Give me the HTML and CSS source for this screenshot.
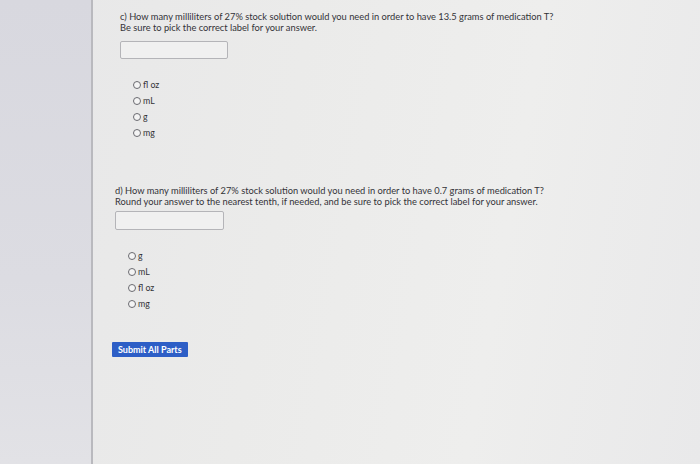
FILE: index.html
```html
<!DOCTYPE html>
<html>
<head>
<meta charset="utf-8">
<link rel="stylesheet" href="styles.css">
</head>
<body>
<div class="screen">
  <aside class="side"></aside>
  <main class="content">
    <section class="part part-c">
      <p class="q">c) How many milliliters of 27% stock solution would you need in order to have 13.5 grams of medication T?<br>Be sure to pick the correct label for your answer.</p>
      <div class="answer"></div>
      <ul class="opts">
        <li><span class="radio"></span>fl oz</li>
        <li><span class="radio"></span>mL</li>
        <li><span class="radio"></span>g</li>
        <li><span class="radio"></span>mg</li>
      </ul>
    </section>
    <section class="part part-d">
      <p class="q">d) How many milliliters of 27% stock solution would you need in order to have 0.7 grams of medication T?<br>Round your answer to the nearest tenth, if needed, and be sure to pick the correct label for your answer.</p>
      <div class="answer"></div>
      <ul class="opts">
        <li><span class="radio"></span>g</li>
        <li><span class="radio"></span>mL</li>
        <li><span class="radio"></span>fl oz</li>
        <li><span class="radio"></span>mg</li>
      </ul>
      <button class="submit">Submit All Parts</button>
    </section>
  </main>
</div>
</body>
</html>
```
FILE: styles.css
```css
html, body {
  margin: 0;
  padding: 0;
  width: 700px;
  height: 464px;
  overflow: hidden;
}
body {
  font-family: Lato, "Open Sans", sans-serif;
  color: #333338;
}
.screen {
  display: flex;
  width: 700px;
  height: 464px;
  background: linear-gradient(100deg, #e7e7e8 0%, #ebebea 40%, #eeeeed 70%, #e9e9ea 100%);
}
.side {
  width: 91px;
  flex: none;
  background: linear-gradient(180deg, #d8d8df 0%, #dcdce2 60%, #e2e2e6 100%);
  border-right: 2px solid #b9b9be;
}
.content {
  flex: 1;
  padding-left: 22px;
}
.q {
  margin: 0;
  font-size: 9.3px;
  line-height: 11px;
}
.part-c {
  padding-top: 11px;
  padding-left: 5px;
}
.answer {
  width: 106px;
  height: 16px;
  border: 1px solid #b4b4b8;
  border-radius: 2px;
  background: #f0f0f0;
}
.part-c .answer {
  margin-top: 8px;
}
.opts {
  list-style: none;
  margin: 0;
  padding: 0 0 0 13px;
  display: flex;
  flex-direction: column;
  gap: 6px;
}
.opts li {
  display: flex;
  align-items: center;
  gap: 2px;
  font-size: 8.8px;
  line-height: 10px;
  height: 10px;
}
.part-c .opts {
  margin-top: 21px;
}
.radio {
  width: 6px;
  height: 6px;
  border: 1px solid #6a6a70;
  border-radius: 50%;
  background: #f4f4f4;
  flex: none;
}
.part-d {
  padding-top: 47px;
}
.part-d .answer {
  margin-top: 4px;
  width: 107px;
  height: 17px;
}
.part-d .opts {
  margin-top: 21px;
}
.submit {
  display: block;
  margin-top: 33px;
  margin-left: -3px;
  padding: 0 6px;
  height: 15px;
  border: none;
  border-radius: 1px;
  background: #2d5ec6;
  color: #ffffff;
  font-family: Lato, "Open Sans", sans-serif;
  font-weight: bold;
  font-size: 9px;
  line-height: 15px;
}
```
